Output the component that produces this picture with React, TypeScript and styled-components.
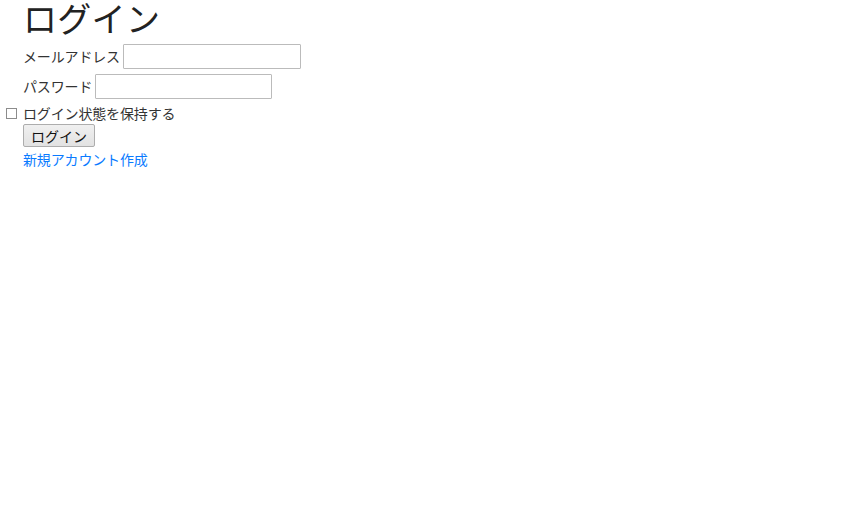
import { createGlobalStyle } from 'styled-components';
import styled from 'styled-components';

const GlobalStyle = createGlobalStyle`
  body {
    margin: 0;
    background: #fff;
    color: #333;
    font-family: "Noto Sans CJK JP", "Noto Sans", sans-serif;
    font-size: 14px;
    letter-spacing: -0.15px;
  }
`;

const Page = styled.div`
  display: flex;
  flex-direction: column;
  padding-left: 23px;
`;

const Title = styled.h1`
  margin: 0 0 7px;
  font-size: 34px;
  font-weight: 400;
  line-height: 36px;
  letter-spacing: 0.3px;
  color: #222;
`;

const Field = styled.div`
  display: flex;
  align-items: center;
  gap: 3px;
  height: 26px;
  margin-bottom: 4px;
`;

const Label = styled.label`
  line-height: 20px;
`;

const TextInput = styled.input<{ $w: number }>`
  box-sizing: border-box;
  width: ${(p) => p.$w}px;
  height: 25px;
  border: 1px solid #bbb;
  border-radius: 1px;
  padding: 2px 4px;
  font: inherit;
`;

const Remember = styled.label`
  display: flex;
  align-items: center;
  gap: 6px;
  height: 18px;
  margin: 1px 0 2px -17px;
`;

const Check = styled.input`
  appearance: none;
  box-sizing: border-box;
  margin: 0;
  width: 11px;
  height: 11px;
  border: 1px solid #8c8c8c;
  background: #fff;

  &:checked {
    background: #0a7bff;
    border-color: #0a7bff;
  }
`;

const Button = styled.button`
  align-self: flex-start;
  height: 23px;
  width: 72px;
  padding: 0;
  font-family: inherit;
  font-size: 14px;
  color: #111;
  background: linear-gradient(#f0f0f0, #e2e2e2);
  border: 1px solid #adadad;
  border-radius: 2px;
`;

const Link = styled.a`
  margin-top: 3px;
  line-height: 18px;
  color: #0a7bff;
  text-decoration: none;
`;

export default function App() {
  return (
    <>
      <GlobalStyle />
      <Page>
        <Title>ログイン</Title>
        <Field>
          <Label>メールアドレス</Label>
          <TextInput type="text" $w={178} />
        </Field>
        <Field>
          <Label>パスワード</Label>
          <TextInput type="password" $w={177} />
        </Field>
        <Remember>
          <Check type="checkbox" />
          <span>ログイン状態を保持する</span>
        </Remember>
        <Button type="button">ログイン</Button>
        <Link href="#">新規アカウント作成</Link>
      </Page>
    </>
  );
}
